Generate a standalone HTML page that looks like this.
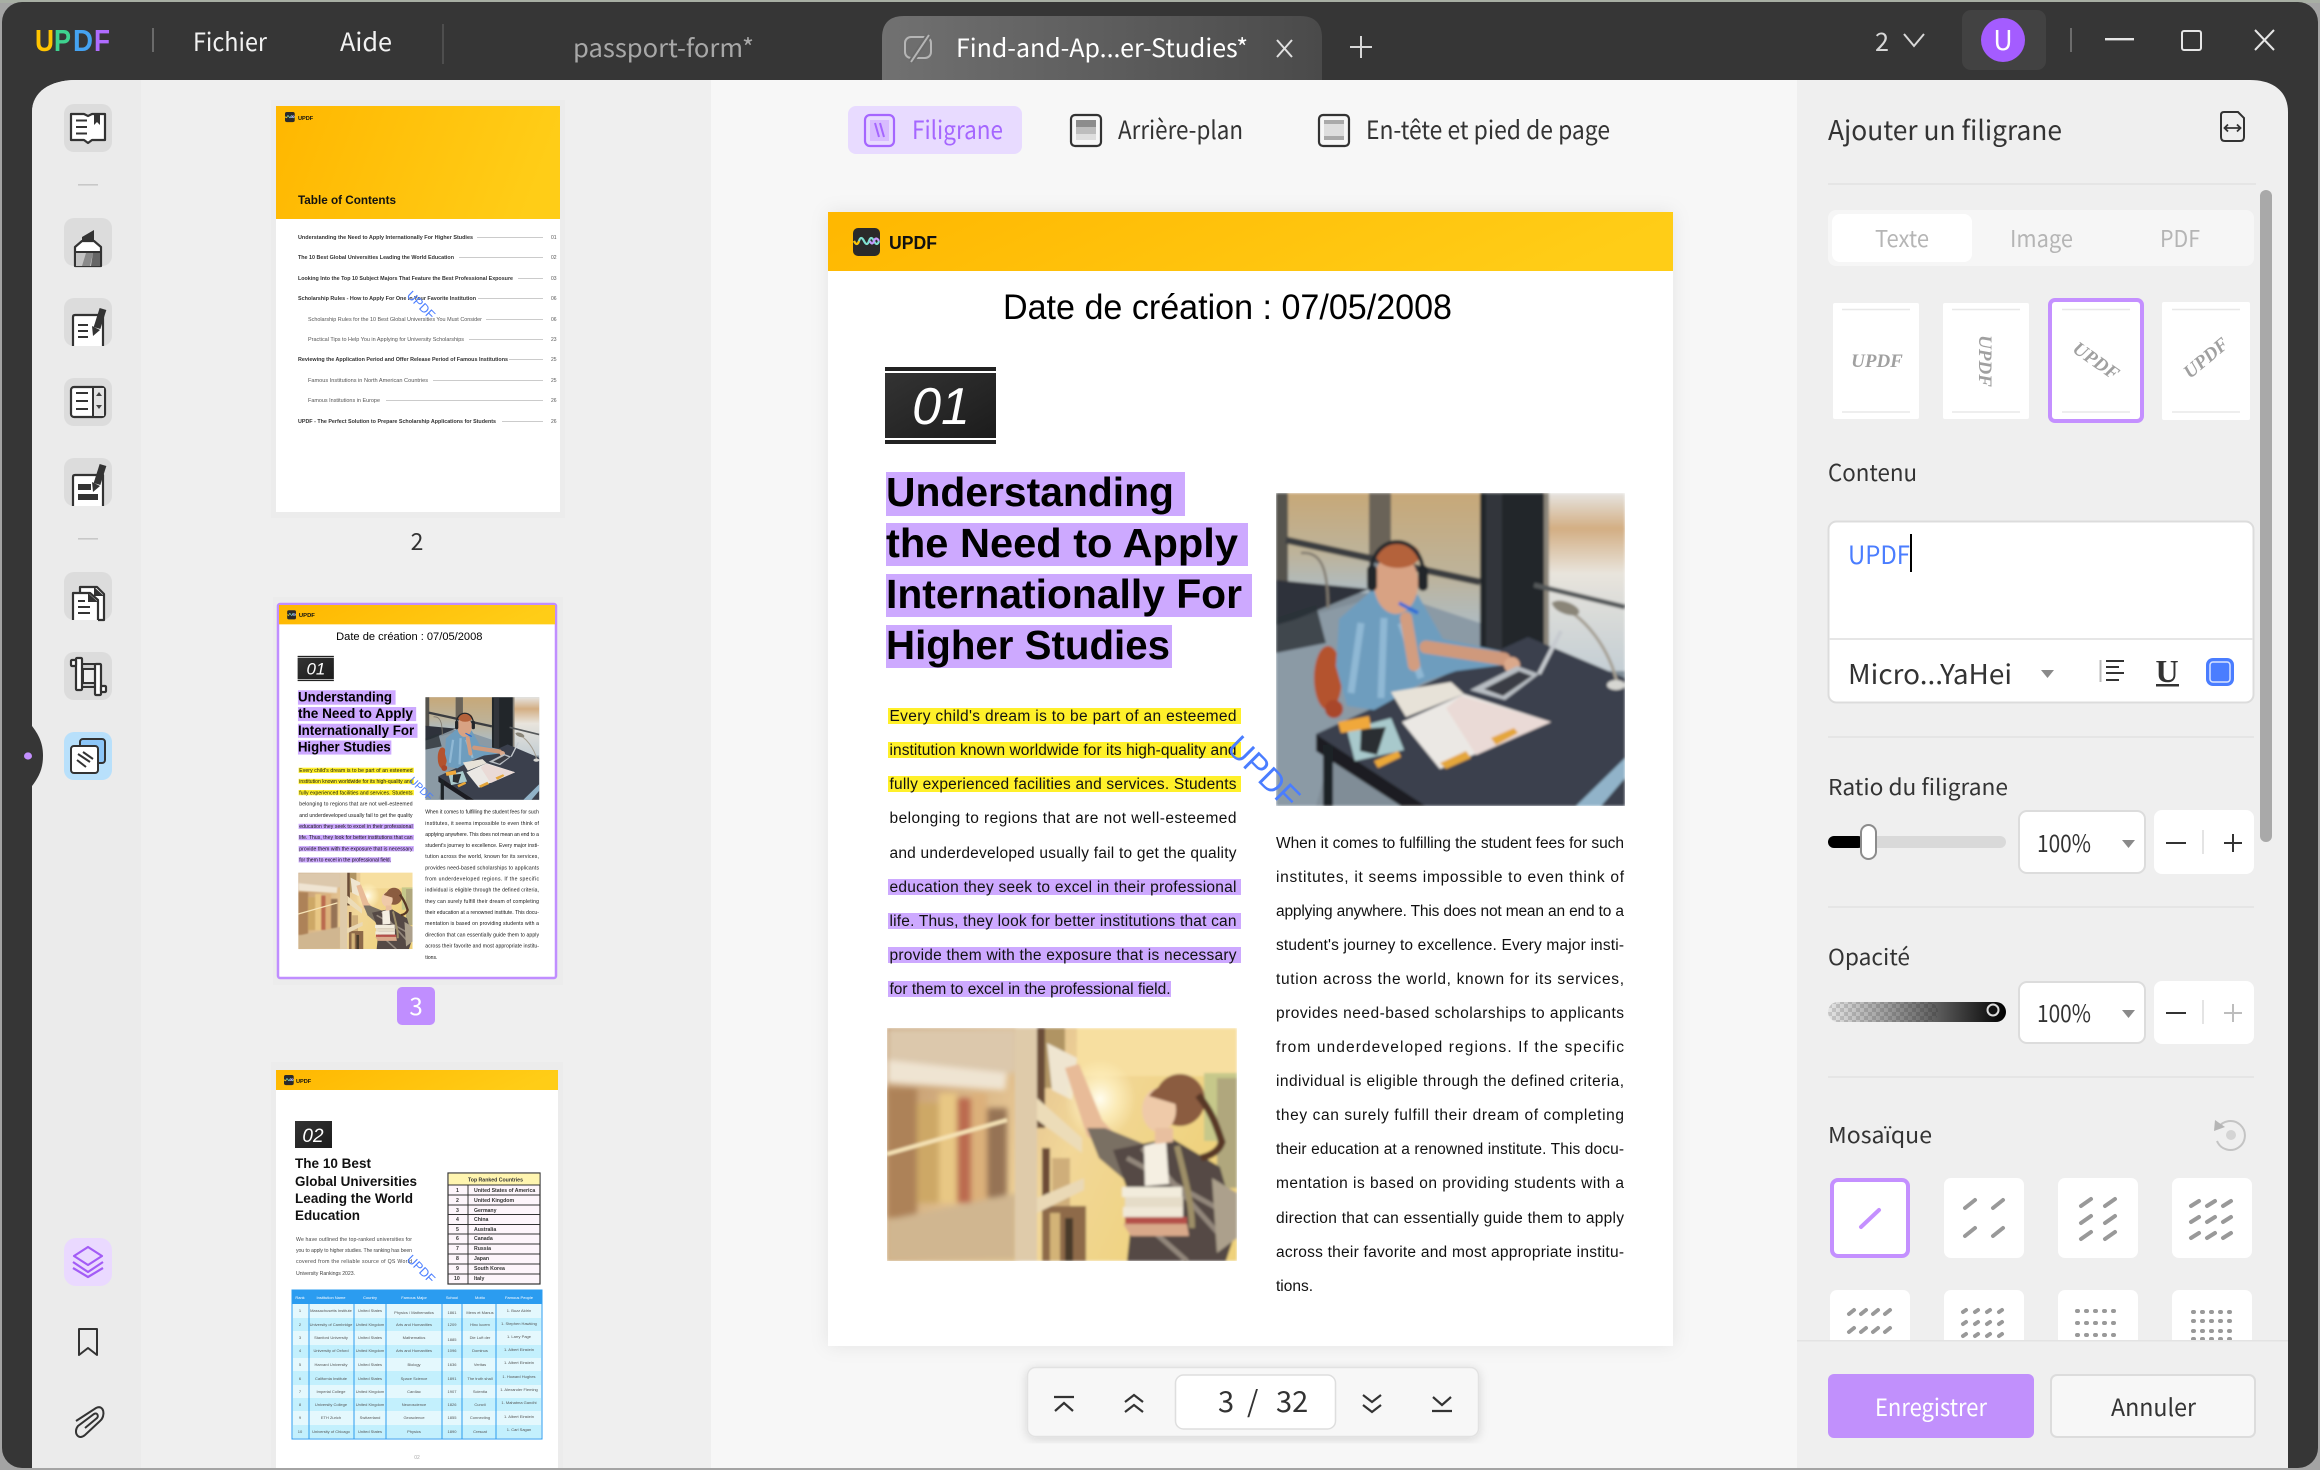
<!DOCTYPE html>
<html lang="fr"><head><meta charset="utf-8"><title>UPDF</title>
<style>
html,body{margin:0;padding:0;background:#a9a9a9}
svg{display:block}
text{white-space:pre}
.u{font-family:"Noto Sans CJK SC","Liberation Sans",sans-serif}
.l{font-family:"Liberation Sans",sans-serif}
.b{font-family:"Liberation Sans",sans-serif;font-size:15.5px;fill:#111}
.h{font-family:"Liberation Sans",sans-serif;font-size:41px;font-weight:700;fill:#000}
.t{font-family:"Liberation Sans",sans-serif;font-size:5.2px;font-weight:700;fill:#333}
.t2{font-family:"Liberation Sans",sans-serif;font-size:5.2px;fill:#555}
.tn{font-family:"Liberation Sans",sans-serif;font-size:5px;fill:#555}
.s{font-family:"Liberation Sans",sans-serif;font-size:4px;fill:#555;text-anchor:middle}
.ic{fill:none;stroke:#333;stroke-width:2}
.pic{fill:#fff;stroke:#333;stroke-width:2.2;stroke-linejoin:round}
.wm{font-family:"Liberation Serif",serif;font-style:italic;font-weight:700;font-size:19px;fill:#a0a0a0;text-anchor:middle}
.d{stroke:#999;stroke-width:4;stroke-linecap:round;fill:none}
</style></head>
<body>
<svg xmlns="http://www.w3.org/2000/svg" width="2320" height="1470" viewBox="0 0 2320 1470">
<defs>
<linearGradient id="yg" x1="0" y1="0" x2="1" y2="0.15"><stop offset="0" stop-color="#ffb700"/><stop offset="1" stop-color="#ffcd17"/></linearGradient>
<linearGradient id="tabg" x1="0" y1="0" x2="1" y2="0"><stop offset="0" stop-color="#717171"/><stop offset="1" stop-color="#4a4a4a"/></linearGradient>
<linearGradient id="opg" x1="0" y1="0" x2="1" y2="0"><stop offset="0" stop-color="#e4e4e4"/><stop offset=".5" stop-color="#777"/><stop offset="1" stop-color="#000"/></linearGradient>
<linearGradient id="opf" x1="0" y1="0" x2="1" y2="0"><stop offset="0" stop-color="#fff" stop-opacity=".9"/><stop offset="1" stop-color="#fff" stop-opacity="0"/></linearGradient>
<pattern id="chk" width="8" height="8" patternUnits="userSpaceOnUse"><rect x="0" y="0" width="4" height="4" fill="#000" opacity=".13"/><rect x="4" y="4" width="4" height="4" fill="#000" opacity=".13"/></pattern>
<linearGradient id="box" x1="0" y1="0" x2="1" y2="1"><stop offset="0" stop-color="#333"/><stop offset="1" stop-color="#1c1c1c"/></linearGradient>
<linearGradient id="a1" x1="0" y1="0" x2="0" y2="1"><stop offset="0" stop-color="#c7a878"/><stop offset=".6" stop-color="#bdb39a"/><stop offset="1" stop-color="#aebcc4"/></linearGradient>
<linearGradient id="a2" x1="0" y1="0" x2="0" y2="1"><stop offset="0" stop-color="#e6e4e0"/><stop offset=".2" stop-color="#d3ae83"/><stop offset=".45" stop-color="#e8e4dc"/><stop offset="1" stop-color="#c4ced4"/></linearGradient>
<linearGradient id="b1" x1="0" y1="0" x2="1" y2=".3"><stop offset="0" stop-color="#bd9268"/><stop offset=".4" stop-color="#e2c190"/><stop offset=".62" stop-color="#f2d798"/><stop offset="1" stop-color="#efd27c"/></linearGradient>
<radialGradient id="fl"><stop offset="0" stop-color="#fffdf0"/><stop offset=".5" stop-color="#fff2c4" stop-opacity=".7"/><stop offset="1" stop-color="#fff2c4" stop-opacity="0"/></radialGradient>
<filter id="bl" x="-5%" y="-5%" width="110%" height="110%"><feGaussianBlur stdDeviation="1.2"/></filter>
<filter id="bl2" x="-5%" y="-5%" width="110%" height="110%"><feGaussianBlur stdDeviation="2.6"/></filter>
<filter id="sh" x="-10%" y="-10%" width="120%" height="120%"><feDropShadow dx="0" dy="2" stdDeviation="5" flood-color="#000" flood-opacity=".14"/></filter>
<filter id="sh2" x="-5%" y="-5%" width="110%" height="110%"><feDropShadow dx="0" dy="0" stdDeviation="9" flood-color="#000" flood-opacity=".08"/></filter>
<clipPath id="c1"><rect width="349" height="313"/></clipPath>
<clipPath id="c2"><rect width="350" height="233"/></clipPath>

<g id="ph1" clip-path="url(#c1)"><g filter="url(#bl)">
<rect width="349" height="313" fill="#808d97"/>
<rect x="0" y="0" width="93" height="100" fill="url(#a1)"/>
<rect x="115" y="0" width="90" height="135" fill="url(#a1)"/>
<rect x="268" y="0" width="81" height="178" fill="url(#a2)"/>
<rect x="0" y="0" width="12" height="90" fill="#54524e"/>
<rect x="93" y="0" width="22" height="70" fill="#6a6458"/>
<rect x="204" y="0" width="64" height="168" fill="#22272b"/>
<rect x="210" y="0" width="16" height="168" fill="#30353a"/>
<rect x="268" y="0" width="5" height="170" fill="#8b857a"/>
<path d="M10 47 L204 89" stroke="#3a3d40" stroke-width="7"/>
<path d="M258 92 L349 114" stroke="#55585a" stroke-width="5"/>
<path d="M0 87 L93 96 L6 132 L0 132Z" fill="#2e333a"/>
<path d="M0 132 L115 100 L204 130 L204 170 L60 240 L40 313 L0 313Z" fill="#8b9aa5"/>
<path d="M0 125 L40 112 L50 150 L0 160Z" fill="#2c3238" opacity=".8"/>
<path d="M40 241 L252 144 L349 185 L349 313 L150 313Z" fill="#3a414e"/>
<path d="M40 241 L150 313 L125 313 L40 258Z" fill="#1c1f24"/>
<rect x="47" y="252" width="10" height="61" fill="#1f2228"/>
<ellipse cx="52" cy="185" rx="14" ry="32" fill="#b4532d"/>
<ellipse cx="58" cy="216" rx="9" ry="9" fill="#a9472a"/>
<path d="M63 126 L95 98 L142 102 L167 146 L224 158 L235 171 L180 178 L148 189 L98 217 L71 213 L60 173Z" fill="#6e9dbe"/>
<path d="M85 130 L75 200 M108 125 L105 205 M125 130 L145 185" stroke="#8fb8d4" stroke-width="7" fill="none"/>
<path d="M150 154 L228 166" stroke="#cf997b" stroke-width="13" stroke-linecap="round"/>
<circle cx="236" cy="172" r="8" fill="#dba98b"/>
<path d="M138 172 L130 125" stroke="#d29d80" stroke-width="12" stroke-linecap="round"/>
<ellipse cx="120" cy="90" rx="22" ry="31" fill="#d8a283"/>
<ellipse cx="122" cy="62" rx="22" ry="13" fill="#b4623a"/>
<path d="M95 88 C90 36 152 36 147 88" fill="none" stroke="#24272b" stroke-width="4"/>
<rect x="91" y="72" width="10" height="26" rx="5" fill="#24272b"/><rect x="142" y="72" width="10" height="26" rx="5" fill="#24272b"/>
<path d="M123 110 L142 120" stroke="#2869d8" stroke-width="3.5"/>
<path d="M126 229 L188 201 L275 229 L164 276Z" fill="#ebe8e4"/>
<path d="M185 203 L275 229 L200 262 L170 215Z" fill="#eadad6"/>
<path d="M115 199 L175 189 L188 201 L130 224Z" fill="#e7e2d8"/>
<path d="M164 270 L190 258 L195 265 L170 276Z" fill="#e4a63a"/>
<path d="M215 245 L238 235 L242 240 L220 252Z" fill="#e4a63a"/>
<path d="M194 197 L241 173 L263 181 L229 207Z" fill="#b8bdc3"/>
<path d="M208 196 L243 178 L256 183 L227 203Z" fill="#3b3e44"/>
<path d="M263 181 L285 138" stroke="#c6cacf" stroke-width="4"/>
<path d="M71 237 L115 225 L128 257 L79 268Z" fill="#a8c9cc"/>
<path d="M85 236 L110 234 L101 262 L84 258Z" fill="#2b2d31"/>
<path d="M62 229 L93 223 L95 235 L65 240Z" fill="#f0a83a"/>
<path d="M98 268 L122 258 L125 264 L102 275Z" fill="#eba838"/>
<path d="M276 110 C310 120 335 160 341 190" fill="none" stroke="#a49e92" stroke-width="3"/>
<ellipse cx="290" cy="115" rx="14" ry="6" transform="rotate(20 290 115)" fill="#8a8578"/>
<ellipse cx="340" cy="192" rx="9" ry="5" fill="#d6d6d2"/>
<path d="M25 60 C45 58 52 75 52 115" fill="none" stroke="#80796e" stroke-width="2.5"/>
<path d="M300 313 L349 265 L349 285 L325 313Z" fill="#91b3c9"/>
</g></g>

<g id="ph2" clip-path="url(#c2)"><g filter="url(#bl)">
<rect width="350" height="233" fill="url(#b1)"/>
<rect x="190" y="0" width="160" height="48" fill="#f7dfa0"/>
<rect x="317" y="45" width="33" height="68" fill="#c6c88a"/>
<rect x="330" y="50" width="20" height="110" fill="#b0a77d"/>
<g filter="url(#bl2)">
<rect x="0" y="0" width="130" height="45" fill="#dcc8ac"/>
<rect x="0" y="60" width="30" height="130" fill="#ad8258"/>
<rect x="30" y="75" width="22" height="100" fill="#cda866"/>
<rect x="52" y="65" width="18" height="110" fill="#e8c784"/>
<rect x="70" y="70" width="14" height="105" fill="#bb6a4f"/>
<rect x="84" y="65" width="16" height="115" fill="#dcb07a"/>
<rect x="100" y="80" width="20" height="90" fill="#967354"/>
<path d="M0 192 L130 165 L130 233 L0 233Z" fill="#d0b690"/>
<path d="M0 32 L120 45 L118 62 L0 55Z" fill="#efe4d2"/>
</g>
<path d="M0 126 L120 92" stroke="#f6e3b6" stroke-width="4"/>
<rect x="128" y="0" width="22" height="233" fill="#dfcbaa"/>
<rect x="150" y="0" width="8" height="100" fill="#6a4e38"/>
<rect x="158" y="0" width="20" height="60" fill="#b09464"/>
<path d="M160 15 L190 30 L185 72 L165 62Z" fill="#efe5d0"/>
<path d="M150 70 L195 110 L195 125 L150 92Z" fill="#ecdcb8"/>
<rect x="155" y="120" width="8" height="50" fill="#6d4c34"/>
<rect x="165" y="130" width="18" height="50" fill="#cfae7a"/>
<rect x="155" y="178" width="44" height="55" fill="#8e6a48"/>
<rect x="163" y="185" width="10" height="48" fill="#d3b377"/><rect x="178" y="190" width="8" height="43" fill="#4a3a2b"/>
<path d="M150 170 L197 150 L197 162 L150 185Z" fill="#ead9b6"/>
<ellipse cx="213" cy="71" rx="36" ry="40" fill="url(#fl)"/>
<path d="M178 40 L192 36 L215 92 L232 110 L222 122 L200 108Z" fill="#e8bb98"/>
<path d="M200 100 L218 100 L262 118 L245 158 L212 130Z" fill="#7a7064"/>
<path d="M226 122 L284 110 L333 139 L350 199 L339 233 L240 233 L246 177Z" fill="#544a44"/>
<path d="M240 130 L330 180 M255 120 L340 215 M240 180 L300 233" stroke="#93877c" stroke-width="5" fill="none"/>
<path d="M257 118 L279 112 L282 156 L258 158Z" fill="#f5efe2"/>
<path d="M325 150 L350 165 L350 210 L330 225Z" fill="#aca08c"/>
<path d="M290 118 C298 150 305 175 305 200" stroke="#9e8f68" stroke-width="6" fill="none"/>
<ellipse cx="293" cy="72" rx="25" ry="26" fill="#8b5b3f"/>
<ellipse cx="272" cy="82" rx="17" ry="22" fill="#efcaa9"/>
<path d="M262 68 C272 52 296 52 305 68 L295 78 Z" fill="#8b5b3f"/>
<path d="M311 67 C326 85 330 100 335 114 C332 124 322 128 314 130" stroke="#583828" stroke-width="7" fill="none"/>
<path d="M268 100 L286 100 L286 114 L268 116Z" fill="#e8bf9f"/>
<rect x="235" y="159" width="60" height="10" fill="#f2ecdc"/><rect x="238" y="169" width="58" height="10" fill="#e5dcc8"/><rect x="236" y="179" width="60" height="10" fill="#f0e8d8"/><rect x="238" y="189" width="62" height="7" fill="#b5504a"/>
<path d="M236 196 L300 196 L302 208 L244 208Z" fill="#d9a98a"/>
</g></g>

<g id="logo"><rect x="0" y="0" width="27" height="28" rx="5" fill="#2a2a2a"/><path d="M1 13 q3 6 5 0 t5 0 t5 0 t5 0 t5 0" fill="none" stroke="#7fe0d0" stroke-width="2.2"/><path d="M1 13 q3 6 5 0" fill="none" stroke="#ffc400" stroke-width="2.2"/><path d="M17 13 q2 5 4 0 t5 0" fill="none" stroke="#c79bff" stroke-width="2.2"/></g>
</defs>

<!-- outside / window -->
<rect width="2320" height="1470" fill="#a4a4a4"/>
<rect width="2320" height="3" fill="#a8afa4"/>
<rect x="2" y="2" width="2316" height="1466" rx="20" fill="#363636"/>

<!-- content surface -->
<path d="M32 1468 V112 C32 92 50 80 76 80 H2250 C2274 80 2288 92 2288 112 V1468 Z" fill="#efefef"/>
<path d="M32 1468 V112 C32 92 50 80 76 80 H141 V1468 Z" fill="#ebebeb"/>
<rect x="711" y="80" width="1086" height="1388" fill="#f7f7f7"/>
<!-- bump -->
<path d="M32 726 C38 734 43 742 43 756 C43 770 38 778 32 786 Z" fill="#363636"/>
<ellipse cx="28" cy="756" rx="4" ry="3.6" fill="#c490ff"/>

<!-- title bar -->
<g class="l" font-size="31" font-weight="700">
<text x="35" y="51" fill="#ffc400" textLength="19" lengthAdjust="spacingAndGlyphs">U</text>
<text x="54" y="51" fill="#3ed38f" textLength="17" lengthAdjust="spacingAndGlyphs">P</text>
<text x="73" y="51" fill="#45a3f2" textLength="20" lengthAdjust="spacingAndGlyphs">D</text>
<text x="94" y="51" fill="#b06cff" textLength="16" lengthAdjust="spacingAndGlyphs">F</text>
</g>
<rect x="152" y="28" width="2" height="24" fill="#6a6a6a"/>
<rect x="442" y="24" width="2" height="40" fill="#4e4e4e"/>
<g class="u" font-size="25">
<text x="193" y="51" fill="#f2f2f2" textLength="74" lengthAdjust="spacingAndGlyphs">Fichier</text>
<text x="340" y="51" fill="#f2f2f2" textLength="52" lengthAdjust="spacingAndGlyphs">Aide</text>
<text x="573" y="57" fill="#a8a8a8" textLength="181" lengthAdjust="spacingAndGlyphs">passport-form*</text>
</g>
<path d="M882 80 V38 Q882 16 904 16 H1300 Q1322 16 1322 38 V80 Z" fill="url(#tabg)"/>
<g fill="none" stroke="#b5b5b5" stroke-width="2"><rect x="905" y="37" width="26" height="21" rx="6"/><path d="M911 62 L929 35" stroke="#6a6a6a" stroke-width="6"/><path d="M911 62 L929 35"/></g>
<text class="u" x="956" y="57" font-size="25" fill="#fff" textLength="292" lengthAdjust="spacingAndGlyphs">Find-and-Ap...er-Studies*</text>
<path d="M1277 40 L1292 57 M1292 40 L1277 57" stroke="#e0e0e0" stroke-width="2" fill="none"/>
<path d="M1361 36 V58 M1350 47 H1372" stroke="#d8d8d8" stroke-width="2" fill="none"/>
<text class="u" x="1875" y="51" font-size="25" fill="#d8d8d8" textLength="14" lengthAdjust="spacingAndGlyphs">2</text>
<path d="M1904 34 L1914 46 L1924 34" stroke="#d8d8d8" stroke-width="2" fill="none"/>
<rect x="1962" y="10" width="84" height="60" rx="9" fill="#424242"/>
<circle cx="2003" cy="40" r="22" fill="#a45cff"/>
<text class="u" x="2003" y="50" font-size="27" fill="#fff" text-anchor="middle">U</text>
<rect x="2070" y="28" width="2" height="24" fill="#6c6c6c"/>
<rect x="2105" y="38" width="29" height="2.4" fill="#e6e6e6"/>
<rect x="2182" y="31" width="19" height="19" rx="2" fill="none" stroke="#e6e6e6" stroke-width="2"/>
<path d="M2255 30 L2274 50 M2274 30 L2255 50" stroke="#e6e6e6" stroke-width="2" fill="none"/>

<!-- left sidebar buttons -->
<g fill="#dcdcdc">
<rect x="64" y="104" width="48" height="48" rx="10"/>
<rect x="64" y="218" width="48" height="48" rx="10"/>
<rect x="64" y="298" width="48" height="48" rx="10"/>
<rect x="64" y="378" width="48" height="48" rx="10"/>
<rect x="64" y="458" width="48" height="48" rx="10"/>
<rect x="64" y="572" width="48" height="48" rx="10"/>
<rect x="64" y="652" width="48" height="48" rx="10"/>
</g>
<rect x="64" y="732" width="48" height="48" rx="10" fill="#b8e0fb"/>
<rect x="78" y="184" width="20" height="1.6" fill="#c8c8c8"/>
<rect x="78" y="538" width="20" height="1.6" fill="#c8c8c8"/>
<!-- book -->
<path class="pic" d="M71 114 H84 L88 116 L92 114 H105 V140 H92 L88 143 L84 140 H71Z"/>
<path d="M76 120.5 H87 M76 127 H87 M76 133.5 H87" stroke="#333" stroke-width="2"/>
<path d="M94 113 H100 V125 L97 122 L94 125Z" fill="#333"/>
<!-- highlighter -->
<path d="M82 241 V237 L94 230 V241Z" fill="#333"/>
<path class="pic" d="M82 241 H94 L101 247 V266 H75 V247Z"/>
<path d="M76 252 H100" stroke="#333" stroke-width="2"/>
<path d="M76 253 H100 V266 H76Z" fill="#c4c4c4"/><path d="M86 253 H93 L90 266 H82Z" fill="#8a8a8a"/><path d="M93 253 H100 V266 H91Z" fill="#666"/>
<!-- note pen -->
<path class="pic" d="M73 346 V317 Q73 315 75 315 H103 V346"/>
<path d="M78 325 H88 M78 331 H88 M78 337 H88" stroke="#333" stroke-width="2"/>
<path d="M103 309 L97 328" stroke="#333" stroke-width="7"/><path d="M92 326 L100 330 L93 336Z" fill="#333"/>
<!-- panel -->
<rect class="pic" x="71" y="387" width="34" height="30" rx="3"/>
<path d="M93 388 H104 V416 H93Z" fill="#e4e4e4"/><path d="M93 387 V417" stroke="#333" stroke-width="2"/>
<path d="M76 393 H88 M76 401 H88 M76 409 H88" stroke="#333" stroke-width="2"/>
<path d="M96 396 L99 392 L102 396Z M96 405 L102 405 L99 409Z" fill="#444"/>
<!-- form edit -->
<path class="pic" d="M73 506 V477 Q73 475 75 475 H103 V506"/>
<rect x="78" y="484" width="13" height="6" fill="#333"/><rect x="78" y="494" width="20" height="6" fill="#333"/>
<path d="M103 465 L97 484" stroke="#333" stroke-width="7"/><path d="M92 482 L100 486 L93 492Z" fill="#333"/>
<!-- pages -->
<path class="pic" d="M80 592 V587 H97 L104 594 V620 H98"/>
<path d="M94 587 L104 596 H94Z" fill="#333"/>
<path class="pic" d="M73 620 V593 H90 L98 600 V620"/>
<path d="M88 593 L98 602 H88Z" fill="#333"/>
<path d="M78 601 H85 M78 607 H90 M78 613 H90" stroke="#333" stroke-width="2"/>
<!-- crop -->
<rect x="78" y="664" width="22" height="23" fill="#d0d0d0" stroke="#333" stroke-width="2"/>
<rect x="83" y="669" width="14" height="14" fill="#eee" stroke="#333" stroke-width="2"/>
<rect class="pic" x="76" y="658" width="6" height="32" rx="1"/>
<rect class="pic" x="95" y="664" width="6" height="31" rx="1"/>
<rect class="pic" x="71" y="660" width="5" height="6" rx="1"/>
<rect class="pic" x="101" y="686" width="5" height="6" rx="1"/>
<!-- watermark -->
<rect x="80" y="739" width="25" height="24" rx="3" fill="#8cc6f8" stroke="#333" stroke-width="2"/>
<rect x="71" y="746" width="27" height="27" rx="3" fill="#fff" stroke="#333" stroke-width="2"/>
<path d="M78 754 L90 762 M77 760 L86 767 M83 752 L93 759" stroke="#333" stroke-width="2"/>
<!-- layers -->
<rect x="64" y="1238" width="48" height="48" rx="12" fill="#ead9ff"/>
<g fill="none" stroke="#a35cf6" stroke-width="2.2" stroke-linejoin="round"><path d="M88 1247 L102 1256 L88 1265 L74 1256Z"/><path d="M73 1262 L88 1272 L103 1262"/><path d="M73 1268 L88 1277 L103 1268"/></g>
<path class="ic" d="M79 1329 H97 V1355 L88 1348 L79 1355Z" stroke-width="2.4" stroke-linejoin="round"/>
<path class="ic" d="M76 1421 L96 1408 C104 1404 106 1416 100 1421 L85 1435 C78 1441 73 1432 78 1426 L94 1414 C97 1412 99 1416 97 1418 L85 1428" stroke="#444" stroke-width="2"/>

<!-- Thumbnails panel -->
<rect x="271" y="100" width="294" height="418" fill="#ececec"/>
<rect x="276" y="106" width="284" height="406" fill="#fff"/>
<rect x="276" y="106" width="284" height="113" fill="url(#yg)"/>
<g transform="translate(285,112) scale(.36)"><use href="#logo"/></g>
<text class="l" x="298" y="120" font-size="5.6" font-weight="700" fill="#111">UPDF</text>
<text class="l" x="298" y="204" font-size="12.3" font-weight="700" fill="#111" textLength="98" lengthAdjust="spacingAndGlyphs">Table of Contents</text>
<g>
<text class="t" x="298" y="239" textLength="175" lengthAdjust="spacingAndGlyphs">Understanding the Need to Apply Internationally For Higher Studies</text>
<text class="t" x="298" y="259" textLength="156" lengthAdjust="spacingAndGlyphs">The 10 Best Global Universities Leading the World Education</text>
<text class="t" x="298" y="280" textLength="215" lengthAdjust="spacingAndGlyphs">Looking Into the Top 10 Subject Majors That Feature the Best Professional Exposure</text>
<text class="t" x="298" y="300" textLength="178" lengthAdjust="spacingAndGlyphs">Scholarship Rules - How to Apply For One In Your Favorite Institution</text>
<text class="t2" x="308" y="321" textLength="174" lengthAdjust="spacingAndGlyphs">Scholarship Rules for the 10 Best Global Universities You Must Consider</text>
<text class="t2" x="308" y="341" textLength="156" lengthAdjust="spacingAndGlyphs">Practical Tips to Help You in Applying for University Scholarships</text>
<text class="t" x="298" y="361" textLength="210" lengthAdjust="spacingAndGlyphs">Reviewing the Application Period and Offer Release Period of Famous Institutions</text>
<text class="t2" x="308" y="382" textLength="120" lengthAdjust="spacingAndGlyphs">Famous Institutions in North American Countries</text>
<text class="t2" x="308" y="402" textLength="72" lengthAdjust="spacingAndGlyphs">Famous Institutions in Europe</text>
<text class="t" x="298" y="423" textLength="198" lengthAdjust="spacingAndGlyphs">UPDF - The Perfect Solution to Prepare Scholarship Applications for Students</text>
<g stroke="#bbb" stroke-width=".8">
<path d="M477 237.5H543 M459 257.5H543 M518 278.5H543 M478 298.5H543 M486 319.5H543 M469 339.5H543 M509 359.5H543 M433 380.5H543 M386 400.5H543 M502 421.5H543"/>
</g>
<text class="tn" x="551" y="239">01</text><text class="tn" x="551" y="259">02</text><text class="tn" x="551" y="280">03</text><text class="tn" x="551" y="300">06</text><text class="tn" x="551" y="321">06</text><text class="tn" x="551" y="341">23</text><text class="tn" x="551" y="361">25</text><text class="tn" x="551" y="382">25</text><text class="tn" x="551" y="402">26</text><text class="tn" x="551" y="423">26</text>
</g>
<text class="l" transform="translate(406,296) rotate(45)" font-size="12.5" fill="#4a7dff">UPDF</text>
<text class="u" x="417" y="550" font-size="23" fill="#333" text-anchor="middle">2</text>

<!-- thumb 3 -->
<rect x="273" y="597" width="290" height="388" fill="#ececec"/>
<rect x="278" y="604" width="278" height="374" fill="#fff" stroke="#c08eff" stroke-width="2.5" rx="2"/>
<g transform="translate(279,605) scale(.3266,.328) translate(-828,-212)">
<rect x="828" y="212" width="845" height="59" fill="url(#yg)"/>
<g transform="translate(853,228)"><use href="#logo"/></g>
<text class="l" x="889" y="249" font-size="18" font-weight="700" fill="#111">UPDF</text>
<text class="l" x="1003" y="319" font-size="35" fill="#000" textLength="448" lengthAdjust="spacingAndGlyphs">Date de création : 07/05/2008</text>
<rect x="885" y="367" width="111" height="4" fill="#222"/><rect x="885" y="373" width="111" height="65" fill="url(#box)"/><rect x="885" y="440" width="111" height="4" fill="#222"/>
<text class="l" x="941" y="424" font-size="52" font-style="italic" fill="#fff" text-anchor="middle">01</text>
<g fill="#cda9ff"><rect x="886" y="472" width="299" height="44"/><rect x="886" y="523" width="362" height="43"/><rect x="886" y="574" width="366" height="43"/><rect x="886" y="625" width="286" height="43"/></g>
<text class="h" x="886" y="506" textLength="288" lengthAdjust="spacingAndGlyphs">Understanding</text>
<text class="h" x="886" y="557" textLength="352" lengthAdjust="spacingAndGlyphs">the Need to Apply</text>
<text class="h" x="886" y="608" textLength="356" lengthAdjust="spacingAndGlyphs">Internationally For</text>
<text class="h" x="886" y="659" textLength="284" lengthAdjust="spacingAndGlyphs">Higher Studies</text>
<g fill="#fff02a"><rect x="888" y="708" width="353" height="16"/><rect x="888" y="742" width="353" height="16"/><rect x="888" y="776" width="353" height="16"/></g>
<g fill="#cda9ff"><rect x="888" y="879" width="353" height="16"/><rect x="888" y="913" width="353" height="16"/><rect x="888" y="947" width="353" height="16"/><rect x="888" y="981" width="283" height="16"/></g>
<g>
<text class="b" x="890" y="721" textLength="347">Every child's dream is to be part of an esteemed</text>
<text class="b" x="890" y="755" textLength="347">institution known worldwide for its high-quality and</text>
<text class="b" x="890" y="789" textLength="347">fully experienced facilities and services. Students</text>
<text class="b" x="890" y="823" textLength="347">belonging to regions that are not well-esteemed</text>
<text class="b" x="890" y="858" textLength="347">and underdeveloped usually fail to get the quality</text>
<text class="b" x="890" y="892" textLength="347">education they seek to excel in their professional</text>
<text class="b" x="890" y="926" textLength="347">life. Thus, they look for better institutions that can</text>
<text class="b" x="890" y="960" textLength="347">provide them with the exposure that is necessary</text>
<text class="b" x="890" y="994" textLength="281">for them to excel in the professional field.</text>
<text class="b" x="1276" y="848" textLength="348">When it comes to fulfilling the student fees for such</text>
<text class="b" x="1276" y="882" textLength="348">institutes, it seems impossible to even think of</text>
<text class="b" x="1276" y="916" textLength="348">applying anywhere. This does not mean an end to a</text>
<text class="b" x="1276" y="950" textLength="348">student's journey to excellence. Every major insti-</text>
<text class="b" x="1276" y="984" textLength="348">tution across the world, known for its services,</text>
<text class="b" x="1276" y="1018" textLength="348">provides need-based scholarships to applicants</text>
<text class="b" x="1276" y="1052" textLength="348">from underdeveloped regions. If the specific</text>
<text class="b" x="1276" y="1086" textLength="348">individual is eligible through the defined criteria,</text>
<text class="b" x="1276" y="1120" textLength="348">they can surely fulfill their dream of completing</text>
<text class="b" x="1276" y="1154" textLength="348">their education at a renowned institute. This docu-</text>
<text class="b" x="1276" y="1188" textLength="348">mentation is based on providing students with a</text>
<text class="b" x="1276" y="1223" textLength="348">direction that can essentially guide them to apply</text>
<text class="b" x="1276" y="1257" textLength="348">across their favorite and most appropriate institu-</text>
<text class="b" x="1276" y="1291">tions.</text>
</g>
<use href="#ph1" x="1276" y="493"/>
<use href="#ph2" x="887" y="1028"/>
<text class="l" transform="translate(1225,749) rotate(45)" font-size="32" fill="#4a7dff">UPDF</text>
</g>
<rect x="397" y="987" width="38" height="38" rx="5" fill="#c08eff"/>
<text class="u" x="416" y="1015" font-size="24" fill="#fff" text-anchor="middle">3</text>

<!-- thumb 4 -->
<rect x="271" y="1062" width="292" height="406" fill="#ececec"/>
<rect x="276" y="1070" width="282" height="398" fill="#fff"/>
<rect x="276" y="1070" width="282" height="20" fill="url(#yg)"/>
<g transform="translate(284,1075) scale(.36)"><use href="#logo"/></g>
<text class="l" x="296" y="1083" font-size="5.6" font-weight="700" fill="#111">UPDF</text>
<rect x="295" y="1121" width="37" height="27" fill="url(#box)"/>
<text class="l" x="313" y="1142" font-size="19" font-style="italic" fill="#fff" text-anchor="middle">02</text>
<g class="l" font-size="14" font-weight="700" fill="#111">
<text x="295" y="1168" textLength="76" lengthAdjust="spacingAndGlyphs">The 10 Best</text>
<text x="295" y="1186" textLength="122" lengthAdjust="spacingAndGlyphs">Global Universities</text>
<text x="295" y="1203" textLength="118" lengthAdjust="spacingAndGlyphs">Leading the World</text>
<text x="295" y="1220" textLength="65" lengthAdjust="spacingAndGlyphs">Education</text>
</g>
<g class="l" font-size="5.2" fill="#444">
<text x="296" y="1241" textLength="116">We have outlined the top-ranked universities for</text>
<text x="296" y="1252" textLength="116">you to apply to higher studies. The ranking has been</text>
<text x="296" y="1263" textLength="116">covered from the reliable source of QS World</text>
<text x="296" y="1275" textLength="59">University Rankings 2023.</text>
</g>
<text class="l" transform="translate(406,1260) rotate(45)" font-size="12.5" fill="#4a7dff">UPDF</text>
<!-- rank table -->
<rect x="448" y="1173" width="92" height="111" fill="#fdf5fb" stroke="#333" stroke-width="1.2"/>
<rect x="448.6" y="1173.6" width="91" height="11.5" fill="#fff5b0"/>
<path d="M448 1185H540 M448 1195H540 M448 1205H540 M448 1214.5H540 M448 1224.5H540 M448 1234H540 M448 1244H540 M448 1254H540 M448 1264H540 M448 1274H540 M468 1185V1284" stroke="#333" stroke-width="1" fill="none"/>
<g class="l" font-size="5.2" font-weight="700" fill="#333">
<text x="468" y="1181.5">Top Ranked Countries</text>
<text x="456" y="1192">1</text><text x="474" y="1192">United States of America</text>
<text x="456" y="1202">2</text><text x="474" y="1202">United Kingdom</text>
<text x="456" y="1212">3</text><text x="474" y="1212">Germany</text>
<text x="456" y="1221">4</text><text x="474" y="1221">China</text>
<text x="456" y="1231">5</text><text x="474" y="1231">Australia</text>
<text x="456" y="1240">6</text><text x="474" y="1240">Canada</text>
<text x="456" y="1250">7</text><text x="474" y="1250">Russia</text>
<text x="456" y="1260">8</text><text x="474" y="1260">Japan</text>
<text x="456" y="1270">9</text><text x="474" y="1270">South Korea</text>
<text x="454" y="1280">10</text><text x="474" y="1280">Italy</text>
</g>
<!-- big table -->
<rect x="292" y="1290" width="250" height="149" fill="#e4f8fd" stroke="#2b9cf0" stroke-width="1"/>
<rect x="292" y="1290" width="250" height="14" fill="#2b9cf0"/>
<g fill="#c3f0fd"><rect x="293" y="1318" width="248" height="13"/><rect x="293" y="1345" width="248" height="13"/><rect x="293" y="1371" width="248" height="14"/><rect x="293" y="1398" width="248" height="13"/><rect x="293" y="1425" width="248" height="13"/></g>
<path d="M309 1290V1439 M354 1290V1439 M386 1290V1439 M442 1290V1439 M462 1290V1439 M496 1290V1439" stroke="#2b9cf0" stroke-width="1" fill="none"/>
<g class="s" style="fill:#fff">
<text x="300" y="1299" style="fill:#fff">Rank</text><text x="331" y="1299" style="fill:#fff">Institution Name</text><text x="370" y="1299" style="fill:#fff">Country</text><text x="414" y="1299" style="fill:#fff">Famous Major</text><text x="452" y="1299" style="fill:#fff">School</text><text x="480" y="1299" style="fill:#fff">Motto</text><text x="519" y="1299" style="fill:#fff">Famous People</text>
</g>
<g class="s">
<text x="300" y="1312">1</text><text x="331" y="1312">Massachusetts Institute</text><text x="370" y="1312">United States</text><text x="414" y="1314">Physics / Mathematics</text><text x="452" y="1314">1861</text><text x="480" y="1314">Mens et Manus</text><text x="519" y="1312">1. Buzz Aldrin</text>
<text x="300" y="1326">2</text><text x="331" y="1326">University of Cambridge</text><text x="370" y="1326">United Kingdom</text><text x="414" y="1326">Arts and Humanities</text><text x="452" y="1326">1209</text><text x="480" y="1326">Hinc lucem</text><text x="519" y="1325">1. Stephen Hawking</text>
<text x="300" y="1339">3</text><text x="331" y="1339">Stanford University</text><text x="370" y="1339">United States</text><text x="414" y="1339">Mathematics</text><text x="452" y="1341">1885</text><text x="480" y="1339">Die Luft der</text><text x="519" y="1338">1. Larry Page</text>
<text x="300" y="1352">4</text><text x="331" y="1352">University of Oxford</text><text x="370" y="1352">United Kingdom</text><text x="414" y="1352">Arts and Humanities</text><text x="452" y="1352">1096</text><text x="480" y="1352">Dominus</text><text x="519" y="1351">1. Albert Einstein</text>
<text x="300" y="1366">5</text><text x="331" y="1366">Harvard University</text><text x="370" y="1366">United States</text><text x="414" y="1366">Biology</text><text x="452" y="1366">1636</text><text x="480" y="1366">Veritas</text><text x="519" y="1364">1. Albert Einstein</text>
<text x="300" y="1380">6</text><text x="331" y="1380">California Institute</text><text x="370" y="1380">United States</text><text x="414" y="1380">Space Science</text><text x="452" y="1380">1891</text><text x="480" y="1380">The truth shall</text><text x="519" y="1378">1. Howard Hughes</text>
<text x="300" y="1393">7</text><text x="331" y="1393">Imperial College</text><text x="370" y="1393">United Kingdom</text><text x="414" y="1393">Cardiac</text><text x="452" y="1393">1907</text><text x="480" y="1393">Scientia</text><text x="519" y="1391">1. Alexander Fleming</text>
<text x="300" y="1406">8</text><text x="331" y="1406">University College</text><text x="370" y="1406">United Kingdom</text><text x="414" y="1406">Neuroscience</text><text x="452" y="1406">1826</text><text x="480" y="1406">Cuncti</text><text x="519" y="1404">1. Mahatma Gandhi</text>
<text x="300" y="1419">9</text><text x="331" y="1419">ETH Zurich</text><text x="370" y="1419">Switzerland</text><text x="414" y="1419">Geoscience</text><text x="452" y="1419">1855</text><text x="480" y="1419">Connecting</text><text x="519" y="1418">1. Albert Einstein</text>
<text x="300" y="1433">10</text><text x="331" y="1433">University of Chicago</text><text x="370" y="1433">United States</text><text x="414" y="1433">Physics</text><text x="452" y="1433">1890</text><text x="480" y="1433">Crescat</text><text x="519" y="1431">1. Carl Sagan</text>
</g>
<text class="l" x="417" y="1459" font-size="5" fill="#aaa" text-anchor="middle">02</text>

<!-- main toolbar -->
<rect x="848" y="106" width="174" height="48" rx="8" fill="#e8dbff"/>
<rect x="865" y="115" width="29" height="31" rx="5" fill="none" stroke="#a566ff" stroke-width="2.2"/>
<rect x="870" y="120" width="19" height="21" fill="#d8bcff"/>
<path d="M875 123 L879 137 M880 123 L884 137" stroke="#a566ff" stroke-width="2"/>
<text class="u" x="912" y="139" font-size="25" fill="#a566ff" textLength="91" lengthAdjust="spacingAndGlyphs">Filigrane</text>
<rect x="1071" y="115" width="30" height="31" rx="4" fill="#f7f7f7" stroke="#333" stroke-width="2.2"/>
<rect x="1076" y="120" width="20" height="7" fill="#8c8c8c"/><rect x="1076" y="127" width="20" height="7" fill="#bdbdbd"/><rect x="1076" y="134" width="20" height="6" fill="#dedede"/>
<text class="u" x="1118" y="139" font-size="25" fill="#333" textLength="125" lengthAdjust="spacingAndGlyphs">Arrière-plan</text>
<rect x="1319" y="115" width="30" height="31" rx="4" fill="#f7f7f7" stroke="#333" stroke-width="2.2"/>
<rect x="1324" y="120" width="20" height="4" fill="#aaa"/><rect x="1324" y="124" width="20" height="12" fill="#dedede"/><rect x="1324" y="136" width="20" height="4" fill="#aaa"/>
<text class="u" x="1366" y="139" font-size="25" fill="#333" textLength="244" lengthAdjust="spacingAndGlyphs">En-tête et pied de page</text>

<!-- main page -->
<rect x="828" y="212" width="845" height="1134" fill="#fff" filter="url(#sh2)"/>
<rect x="828" y="212" width="845" height="59" fill="url(#yg)"/>
<g transform="translate(853,228)"><use href="#logo"/></g>
<text class="l" x="889" y="249" font-size="18" font-weight="700" fill="#111" textLength="48" lengthAdjust="spacingAndGlyphs">UPDF</text>
<text class="l" x="1003" y="319" font-size="35" fill="#000" textLength="449" lengthAdjust="spacingAndGlyphs">Date de création : 07/05/2008</text>
<rect x="885" y="367" width="111" height="4" fill="#222"/><rect x="885" y="373" width="111" height="65" fill="url(#box)"/><rect x="885" y="440" width="111" height="4" fill="#222"/>
<text class="l" x="941" y="424" font-size="52" font-style="italic" fill="#fff" text-anchor="middle">01</text>
<g fill="#cda9ff"><rect x="886" y="472" width="299" height="44"/><rect x="886" y="523" width="362" height="43"/><rect x="886" y="574" width="366" height="43"/><rect x="886" y="625" width="286" height="43"/></g>
<text class="h" x="886" y="506" textLength="288" lengthAdjust="spacingAndGlyphs">Understanding</text>
<text class="h" x="886" y="557" textLength="352" lengthAdjust="spacingAndGlyphs">the Need to Apply</text>
<text class="h" x="886" y="608" textLength="356" lengthAdjust="spacingAndGlyphs">Internationally For</text>
<text class="h" x="886" y="659" textLength="284" lengthAdjust="spacingAndGlyphs">Higher Studies</text>
<g fill="#fff02a"><rect x="888" y="708" width="353" height="16"/><rect x="888" y="742" width="353" height="16"/><rect x="888" y="776" width="353" height="16"/></g>
<g fill="#cda9ff"><rect x="888" y="879" width="353" height="16"/><rect x="888" y="913" width="353" height="16"/><rect x="888" y="947" width="353" height="16"/><rect x="888" y="981" width="283" height="16"/></g>
<text class="b" x="889.500" y="721" textLength="347">Every child's dream is to be part of an esteemed</text>
<text class="b" x="889.500" y="755" textLength="347">institution known worldwide for its high-quality and</text>
<text class="b" x="889.500" y="789" textLength="347">fully experienced facilities and services. Students</text>
<text class="b" x="889.500" y="823" textLength="347">belonging to regions that are not well-esteemed</text>
<text class="b" x="889.500" y="858" textLength="347">and underdeveloped usually fail to get the quality</text>
<text class="b" x="889.500" y="892" textLength="347">education they seek to excel in their professional</text>
<text class="b" x="889.500" y="926" textLength="347">life. Thus, they look for better institutions that can</text>
<text class="b" x="889.500" y="960" textLength="347">provide them with the exposure that is necessary</text>
<text class="b" x="889.500" y="994" textLength="281">for them to excel in the professional field.</text>
<text class="b" x="1276" y="848" textLength="348">When it comes to fulfilling the student fees for such</text>
<text class="b" x="1276" y="882" textLength="348">institutes, it seems impossible to even think of</text>
<text class="b" x="1276" y="916" textLength="348">applying anywhere. This does not mean an end to a</text>
<text class="b" x="1276" y="950" textLength="348">student's journey to excellence. Every major insti-</text>
<text class="b" x="1276" y="984" textLength="348">tution across the world, known for its services,</text>
<text class="b" x="1276" y="1018" textLength="348">provides need-based scholarships to applicants</text>
<text class="b" x="1276" y="1052" textLength="348">from underdeveloped regions. If the specific</text>
<text class="b" x="1276" y="1086" textLength="348">individual is eligible through the defined criteria,</text>
<text class="b" x="1276" y="1120" textLength="348">they can surely fulfill their dream of completing</text>
<text class="b" x="1276" y="1154" textLength="348">their education at a renowned institute. This docu-</text>
<text class="b" x="1276" y="1188" textLength="348">mentation is based on providing students with a</text>
<text class="b" x="1276" y="1223" textLength="348">direction that can essentially guide them to apply</text>
<text class="b" x="1276" y="1257" textLength="348">across their favorite and most appropriate institu-</text>
<text class="b" x="1276" y="1291">tions.</text>
<use href="#ph1" x="1276" y="493"/>
<use href="#ph2" x="887" y="1028"/>
<text class="l" transform="translate(1225,749) rotate(45)" font-size="32" fill="#4a7dff">UPDF</text>

<!-- page nav -->
<rect x="1027.500" y="1367.500" width="451" height="69" rx="8" fill="#f7f7f7" stroke="#e2e2e2" stroke-width="1.500" filter="url(#sh)"/>
<rect x="1175.500" y="1375" width="160" height="54" rx="8" fill="#fff" stroke="#dedede" stroke-width="1.500"/>
<text class="u" x="1218" y="1412" font-size="29" fill="#333">3</text>
<text class="u" x="1247" y="1412" font-size="29" fill="#333">/</text>
<text class="u" x="1276" y="1412" font-size="29" fill="#333">32</text>
<g fill="none" stroke="#333" stroke-width="2.2">
<path d="M1054 1397 H1074 M1055 1411 L1064 1403 L1073 1411"/>
<path d="M1125 1402 L1134 1395 L1143 1402 M1125 1412 L1134 1405 L1143 1412"/>
<path d="M1363 1395 L1372 1402 L1381 1395 M1363 1405 L1372 1412 L1381 1405"/>
<path d="M1433 1397 L1442 1405 L1451 1397 M1432 1411 H1452"/>
</g>

<!-- right panel -->
<text class="u" x="1828" y="140" font-size="27" fill="#333" textLength="234" lengthAdjust="spacingAndGlyphs">Ajouter un filigrane</text>
<path d="M2224 112 H2238 L2244 118 V137 Q2244 141 2240 141 H2225 Q2221 141 2221 137 V115 Q2221 112 2224 112Z" fill="none" stroke="#333" stroke-width="2"/>
<path d="M2225 128 H2240 M2228 124.5 L2224.5 128 L2228 131.5 M2237 124.5 L2240.5 128 L2237 131.5" fill="none" stroke="#333" stroke-width="1.800"/>
<rect x="1828" y="183" width="428" height="2" fill="#e5e5e5"/>
<rect x="2260" y="190" width="12" height="652" rx="6" fill="#a9a9a9"/>
<rect x="1828" y="210" width="426" height="56" rx="8" fill="#f6f6f6"/>
<rect x="1832" y="214" width="140" height="48" rx="8" fill="#fff"/>
<g class="u" font-size="23" fill="#b5b5b5">
<text x="1875" y="247" textLength="54" lengthAdjust="spacingAndGlyphs">Texte</text>
<text x="2010" y="247" textLength="63" lengthAdjust="spacingAndGlyphs">Image</text>
<text x="2160" y="247" textLength="40" lengthAdjust="spacingAndGlyphs">PDF</text>
</g>
<g fill="#fff">
<rect x="1833" y="303" width="86" height="116" rx="2"/><rect x="1943" y="303" width="86" height="116" rx="2"/>
<rect x="2162" y="302" width="88" height="118" rx="2"/>
</g>
<rect x="2050" y="300" width="92" height="121" rx="5" fill="#fff" stroke="#c490ff" stroke-width="4"/>
<path d="M1842 309.5H1910 M1842 412H1910 M1952 309.5H2020 M1952 412H2020 M2062 309.5H2130 M2062 412H2130 M2172 309.5H2240 M2172 412H2240" stroke="#e8e8e8" stroke-width="1.500"/>
<text class="wm" x="1877" y="367">UPDF</text>
<text class="wm" transform="translate(1985,361) rotate(90)" x="0" y="6">UPDF</text>
<text class="wm" transform="translate(2096,361) rotate(35)" x="0" y="6">UPDF</text>
<text class="wm" transform="translate(2206,358) rotate(-40)" x="0" y="6">UPDF</text>

<text class="u" x="1828" y="481" font-size="23" fill="#333" textLength="89" lengthAdjust="spacingAndGlyphs">Contenu</text>
<rect x="1828.500" y="521.500" width="425" height="181" rx="8" fill="#fff" stroke="#dcdcdc" stroke-width="2"/>
<rect x="1829" y="638" width="424" height="2" fill="#e6e6e6"/>
<text class="u" x="1848" y="564" font-size="25" fill="#4a7dff" textLength="62" lengthAdjust="spacingAndGlyphs">UPDF</text>
<rect x="1910" y="534" width="2" height="38" fill="#000"/>
<text class="u" x="1848" y="684" font-size="27" fill="#333" textLength="164" lengthAdjust="spacingAndGlyphs">Micro...YaHei</text>
<path d="M2041 670 H2054 L2047.5 678Z" fill="#8a8a8a"/>
<path d="M2100.5 660 V682" stroke="#bbb" stroke-width="2"/>
<path d="M2106 661 H2124 M2106 667 H2119 M2106 673 H2124 M2106 680 H2119" stroke="#333" stroke-width="2"/>
<text x="2167" y="682" font-size="32" font-weight="700" fill="#333" text-anchor="middle" style="font-family:'Liberation Serif',serif">U</text>
<rect x="2156" y="684" width="23" height="2.500" fill="#333"/>
<rect x="2206" y="658" width="28" height="28" rx="7" fill="#4a7dff"/>
<rect x="2210" y="662" width="20" height="20" rx="3" fill="#4a7dff" stroke="#d9e4ff" stroke-width="1.500"/>

<rect x="1828" y="736" width="426" height="2" fill="#e5e5e5"/>
<text class="u" x="1828" y="795" font-size="22" fill="#333" textLength="180" lengthAdjust="spacingAndGlyphs">Ratio du filigrane</text>
<rect x="1828" y="836" width="178" height="12" rx="6" fill="#d9d9d9"/>
<rect x="1828" y="836" width="36" height="12" rx="6" fill="#000"/>
<rect x="1861" y="825" width="15" height="34" rx="7.500" fill="#fff" stroke="#8c8c8c" stroke-width="2"/>
<rect x="2019" y="811" width="126" height="62" rx="8" fill="#fff" stroke="#dcdcdc" stroke-width="2"/>
<text class="u" x="2037" y="852" font-size="24" fill="#333" textLength="54" lengthAdjust="spacingAndGlyphs">100%</text>
<path d="M2122 840 H2135 L2128.5 848Z" fill="#8a8a8a"/>
<rect x="2154" y="810" width="100" height="64" rx="8" fill="#fff"/>
<path d="M2166 843 H2186 M2224 843 H2242 M2233 834 V852" stroke="#333" stroke-width="2"/>
<rect x="2202" y="830" width="2" height="24" fill="#e4e4e4"/>

<rect x="1828" y="906" width="426" height="2" fill="#e5e5e5"/>
<text class="u" x="1828" y="965" font-size="22" fill="#333" textLength="82" lengthAdjust="spacingAndGlyphs">Opacité</text>
<rect x="1828" y="1002" width="178" height="20" rx="10" fill="url(#opg)"/>
<rect x="1828" y="1002" width="110" height="20" rx="10" fill="url(#chk)"/>
<circle cx="1993" cy="1010" r="5.500" fill="#111" stroke="#ddd" stroke-width="2"/>
<rect x="2019" y="982" width="126" height="61" rx="8" fill="#fff" stroke="#dcdcdc" stroke-width="2"/>
<text class="u" x="2037" y="1022" font-size="24" fill="#333" textLength="54" lengthAdjust="spacingAndGlyphs">100%</text>
<path d="M2122 1010 H2135 L2128.5 1018Z" fill="#8a8a8a"/>
<rect x="2154" y="981" width="100" height="63" rx="8" fill="#fff"/>
<path d="M2166 1013 H2186" stroke="#333" stroke-width="2"/>
<path d="M2224 1013 H2242 M2233 1004 V1022" stroke="#bdbdbd" stroke-width="2"/>
<rect x="2202" y="1000" width="2" height="24" fill="#e4e4e4"/>

<rect x="1828" y="1076" width="426" height="2" fill="#e5e5e5"/>
<text class="u" x="1828" y="1143" font-size="22" fill="#333" textLength="104" lengthAdjust="spacingAndGlyphs">Mosaïque</text>
<path d="M2218 1128 A14.5 14.5 0 1 1 2217 1141" fill="none" stroke="#c4c4c4" stroke-width="2"/>
<path d="M2215 1120 L2225 1127 L2214 1131Z" fill="#b5b5b5"/>
<circle cx="2231" cy="1135" r="5" fill="#d4d4d4"/>

<rect x="1832" y="1180" width="76" height="76" rx="6" fill="#fff" stroke="#c490ff" stroke-width="4"/>
<g fill="#fff">
<rect x="1944" y="1178" width="80" height="80" rx="7"/><rect x="2058" y="1178" width="80" height="80" rx="7"/><rect x="2172" y="1178" width="80" height="80" rx="7"/>
<rect x="1830" y="1290" width="80" height="70" rx="7"/><rect x="1944" y="1290" width="80" height="70" rx="7"/><rect x="2058" y="1290" width="80" height="70" rx="7"/><rect x="2172" y="1290" width="80" height="70" rx="7"/>
</g>
<path d="M1861 1227 L1879 1210" stroke="#c490ff" stroke-width="4" stroke-linecap="round"/>
<path class="d" d="M1965 1208l10-8M1993 1208l10-8M1965 1236l10-8M1993 1236l10-8"/>
<path class="d" d="M2081 1206l10-7M2105 1206l10-7M2081 1223l10-7M2105 1223l10-7M2081 1239l10-7M2105 1239l10-7"/>
<path class="d" d="M2191 1206l8-5M2207 1206l8-5M2223 1206l8-5M2191 1222l8-5M2207 1222l8-5M2223 1222l8-5M2191 1238l8-5M2207 1238l8-5M2223 1238l8-5"/>
<path class="d" d="M1849 1314l5-4M1861 1314l5-4M1873 1314l5-4M1885 1314l5-4M1849 1332l5-4M1861 1332l5-4M1873 1332l5-4M1885 1332l5-4"/>
<path class="d" d="M1963 1312l3-2M1975 1312l3-2M1987 1312l3-2M1999 1312l3-2M1963 1324l3-2M1975 1324l3-2M1987 1324l3-2M1999 1324l3-2M1963 1336l3-2M1975 1336l3-2M1987 1336l3-2M1999 1336l3-2"/>
<path class="d" d="M2077 1311h1M2086 1311h1M2095 1311h1M2104 1311h1M2113 1311h1M2077 1323h1M2086 1323h1M2095 1323h1M2104 1323h1M2113 1323h1M2077 1335h1M2086 1335h1M2095 1335h1M2104 1335h1M2113 1335h1"/>
<path class="d" d="M2193 1312h1M2202 1312h1M2211 1312h1M2220 1312h1M2229 1312h1M2193 1321h1M2202 1321h1M2211 1321h1M2220 1321h1M2229 1321h1M2193 1331h1M2202 1331h1M2211 1331h1M2220 1331h1M2229 1331h1M2193 1339h1M2202 1339h1M2211 1339h1M2220 1339h1M2229 1339h1"/>

<!-- footer -->
<rect x="1797" y="1340" width="491" height="128" fill="#efefef"/>
<rect x="1797" y="1340" width="491" height="1.500" fill="#e3e3e3"/>
<rect x="1828" y="1374" width="206" height="64" rx="6" fill="#c190fc"/>
<text class="u" x="1875" y="1416" font-size="24" fill="#fff" textLength="112" lengthAdjust="spacingAndGlyphs">Enregistrer</text>
<rect x="2051" y="1375" width="204" height="62" rx="6" fill="#f7f7f7" stroke="#dcdcdc" stroke-width="2"/>
<text class="u" x="2111" y="1416" font-size="24" fill="#333" textLength="85" lengthAdjust="spacingAndGlyphs">Annuler</text>
</svg>
</body></html>
